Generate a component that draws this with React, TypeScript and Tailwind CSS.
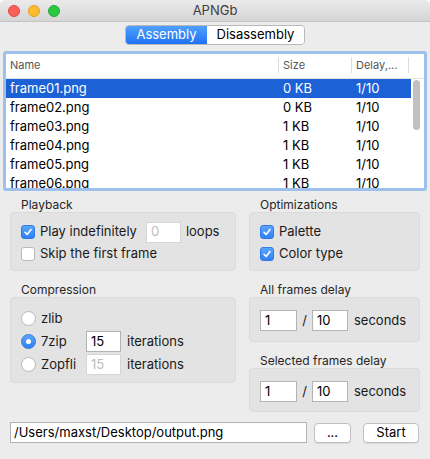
import type { ReactNode } from "react";

const font = { fontFamily: '"Inter", "Liberation Sans", sans-serif' };

const rows = [
  ["frame01.png", "0 KB", "1/10"],
  ["frame02.png", "0 KB", "1/10"],
  ["frame03.png", "1 KB", "1/10"],
  ["frame04.png", "1 KB", "1/10"],
  ["frame05.png", "1 KB", "1/10"],
  ["frame06.png", "1 KB", "1/10"],
];

function Check({ on, children }: { on?: boolean; children: ReactNode }) {
  return (
    <div className="flex items-center h-[20px] gap-[5px]">
      {on ? (
        <span className="w-[14px] h-[14px] rounded-[3px] bg-gradient-to-b from-[#5aa6fb] to-[#2f80f2] border border-[#2f7ae6] flex items-center justify-center">
          <svg width="10" height="10" viewBox="0 0 10 10">
            <path d="M2 5.3 L4.1 7.4 L8 2.6" stroke="white" strokeWidth="1.6" fill="none" strokeLinecap="round" strokeLinejoin="round" />
          </svg>
        </span>
      ) : (
        <span className="w-[14px] h-[14px] rounded-[3px] bg-white border border-[#b9b9b9]" />
      )}
      <span>{children}</span>
    </div>
  );
}

function Radio({ on }: { on?: boolean }) {
  return on ? (
    <span className="w-[15px] h-[15px] rounded-full bg-gradient-to-b from-[#5aa6fb] to-[#2f80f2] border border-[#2f7ae6] flex items-center justify-center shrink-0">
      <span className="w-[5px] h-[5px] rounded-full bg-white" />
    </span>
  ) : (
    <span className="w-[15px] h-[15px] rounded-full bg-white border border-[#b9b9b9] shrink-0" />
  );
}

function Field({ value, w, disabled }: { value: string; w: string; disabled?: boolean }) {
  return (
    <div
      className={`${w} h-[21px] bg-white border flex items-center px-[4px] ${
        disabled ? "border-[#d6d6d6] text-[#bdbdbd]" : "border-[#b3b3b3] text-black"
      }`}
    >
      {value}
    </div>
  );
}

function Group({ title, children, className }: { title: string; children: ReactNode; className: string }) {
  return (
    <div className="flex flex-col">
      <div className="h-[14px] leading-[14px] text-[12px] pl-[11px] text-[#262626]">{title}</div>
      <div className={`bg-[#e3e3e3] border border-[#dbdbdb] rounded-[4px] ${className}`}>{children}</div>
    </div>
  );
}

function DelayRow() {
  return (
    <div className="flex items-center h-[21px] pl-[10px]">
      <Field value="1" w="w-[37px]" />
      <span className="w-[15px] text-center">/</span>
      <Field value="10" w="w-[36px]" />
      <span className="ml-[6px]">seconds</span>
    </div>
  );
}

export default function App() {
  return (
    <div
      className="w-[430px] h-[459px] bg-[#ececec] text-[13px] text-[#1a1a1a] overflow-hidden rounded-t-[5px] flex flex-col"
      style={font}
    >
      {/* title bar */}
      <div className="h-[22px] shrink-0 grid grid-cols-[1fr_auto_1fr] items-center bg-gradient-to-b from-[#ebebeb] to-[#d5d5d5] border-b border-[#c4c4c4]">
        <div className="flex items-center gap-[8px] pl-[8px]">
          <span className="w-[12px] h-[12px] rounded-full bg-[#fc5f57] border border-[#de4a43]" />
          <span className="w-[12px] h-[12px] rounded-full bg-[#fdbb2e] border border-[#dea024]" />
          <span className="w-[12px] h-[12px] rounded-full bg-[#2ac840] border border-[#1fab32]" />
        </div>
        <div className="text-[13px] text-[#3d3d3d]">APNGb</div>
        <div />
      </div>

      {/* segmented control */}
      <div className="flex justify-center mt-[3px]">
        <div className="flex h-[20px] rounded-[4px] overflow-hidden border border-[#b9b9b9] text-[13px]">
          <div className="w-[81px] flex items-center justify-center text-white bg-gradient-to-b from-[#4fa0fc] to-[#1f72f4]">
            Assembly
          </div>
          <div className="w-[97px] flex items-center justify-center bg-white text-black">Disassembly</div>
        </div>
      </div>

      {/* frame list */}
      <div className="mx-[3px] mt-[6px] h-[140px] shrink-0 border-[3px] border-[#9dc0ec] rounded-[3px] bg-white overflow-hidden relative">
        <div className="flex h-[25px] pb-[2px] items-center text-[11px] text-[#555] border-b border-[#e3e3e3]">
          <div className="w-[272px] pl-[4px]">Name</div>
          <div className="w-[73px] border-l border-[#dcdcdc] pl-[4px]">Size</div>
          <div className="w-[57px] border-l border-[#dcdcdc] pl-[4px]">Delay,...</div>
          <div className="flex-1 h-[16px] border-l border-[#dcdcdc]" />
        </div>
        {rows.map((r, i) => (
          <div
            key={r[0]}
            className={`flex h-[19px] items-center w-[405px] ${i === 0 ? "bg-[#1c62d6] text-white" : "text-black"}`}
          >
            <div className="w-[272px] pl-[4px]">{r[0]}</div>
            <div className="w-[73px] pl-[5px]">{r[1]}</div>
            <div className="w-[57px] pl-[5px]">{r[2]}</div>
          </div>
        ))}
        <div className="absolute right-[4px] top-[26px] w-[7px] h-[50px] rounded-full bg-[#c1c1c1]" />
      </div>

      {/* option groups */}
      <div className="grid grid-cols-[226px_171px] gap-x-[13px] pl-[10px] mt-[7px]">
        <Group title="Playback" className="pt-[9px] pb-[6px] pl-[10px] flex flex-col gap-[2px]">
          <div className="flex items-center h-[20px]">
            <Check on>Play indefinitely</Check>
            <div className="ml-[9px]">
              <Field value="0" w="w-[35px]" disabled />
            </div>
            <span className="ml-[5px]">loops</span>
          </div>
          <Check>Skip the first frame</Check>
        </Group>

        <Group title="Optimizations" className="pt-[9px] pb-[6px] pl-[10px] flex flex-col gap-[2px]">
          <Check on>Palette</Check>
          <Check on>Color type</Check>
        </Group>

        <div className="mt-[12px]">
          <Group title="Compression" className="pt-[9px] pb-[6px] pl-[10px] flex flex-col">
            <div className="flex items-center h-[23px] gap-[5px]">
              <Radio />
              <span>zlib</span>
            </div>
            <div className="flex items-center h-[23px]">
              <Radio on />
              <span className="ml-[5px] w-[45px]">7zip</span>
              <Field value="15" w="w-[35px]" />
              <span className="ml-[6px]">iterations</span>
            </div>
            <div className="flex items-center h-[23px]">
              <Radio />
              <span className="ml-[5px] w-[45px]">Zopfli</span>
              <Field value="15" w="w-[35px]" disabled />
              <span className="ml-[6px]">iterations</span>
            </div>
          </Group>
        </div>

        <div className="mt-[12px] flex flex-col gap-[12px]">
          <Group title="All frames delay" className="pt-[12px] pb-[10px]">
            <DelayRow />
          </Group>
          <Group title="Selected frames delay" className="pt-[12px] pb-[9px]">
            <DelayRow />
          </Group>
        </div>
      </div>

      {/* output row */}
      <div className="flex items-center pl-[10px] mt-[10px]">
        <div className="w-[297px] h-[21px] bg-white border border-[#b3b3b3] flex items-center px-[3px] text-black">
          /Users/maxst/Desktop/output.png
        </div>
        <button className="ml-[7px] w-[37px] h-[20px] bg-white border border-[#c0c0c0] rounded-[4px] flex items-center justify-center text-black shadow-[0_1px_0_rgba(0,0,0,0.08)]">
          ...
        </button>
        <button className="ml-[12px] w-[56px] h-[20px] bg-white border border-[#c0c0c0] rounded-[4px] flex items-center justify-center text-black shadow-[0_1px_0_rgba(0,0,0,0.08)]">
          Start
        </button>
      </div>
    </div>
  );
}
